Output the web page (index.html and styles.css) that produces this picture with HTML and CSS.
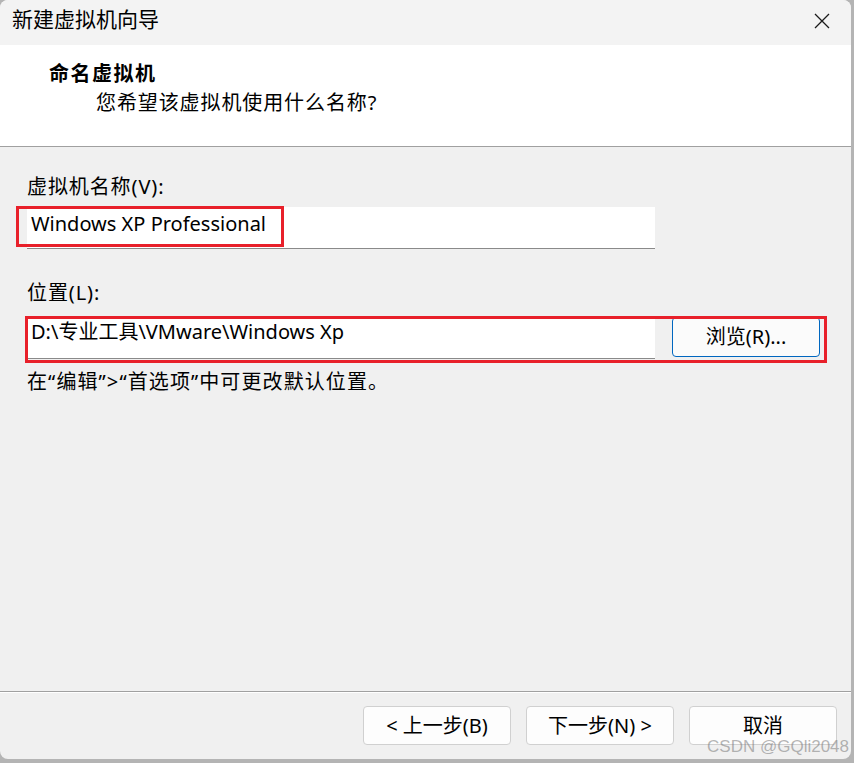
FILE: index.html
```html
<!DOCTYPE html>
<html lang="zh-CN">
<head>
    <meta charset="UTF-8">
    <title>新建虚拟机向导</title>
    <link rel="stylesheet" href="styles.css">
</head>
<body>
    <div class="window">
        <div class="titlebar">
            <span class="title">新建虚拟机向导</span>
            <svg class="close" width="16" height="16" viewBox="0 0 16 16">
                <path d="M1 1 L15 15 M15 1 L1 15" stroke="#1a1a1a" stroke-width="1.3" fill="none"/>
            </svg>
        </div>

        <div class="header">
            <div class="header-title">命名虚拟机</div>
            <div class="header-sub">您希望该虚拟机使用什么名称?</div>
        </div>

        <div class="content">
            <div class="label">虚拟机名称(V):</div>
            <div class="field name-field">
                <span class="field-text">Windows XP Professional</span>
                <div class="mark mark-name"></div>
            </div>

            <div class="label label-loc">位置(L):</div>
            <div class="row">
                <div class="field loc-field">
                    <span class="field-text">D:\专业工具\VMware\Windows Xp</span>
                </div>
                <button class="btn browse">浏览(R)...</button>
                <div class="mark mark-loc"></div>
            </div>
            <div class="hint">在“编辑”&gt;“首选项”中可更改默认位置。</div>
        </div>

        <div class="footer">
            <button class="btn">&lt; 上一步(B)</button>
            <button class="btn">下一步(N) &gt;</button>
            <button class="btn">取消</button>
        </div>

        <div class="watermark">CSDN @GQli2048</div>
    </div>
</body>
</html>
```

FILE: styles.css
```css
body {
    margin: 0;
    padding: 0;
    width: 854px;
    height: 763px;
    overflow: hidden;
    background: #b4b4b4;
    font-family: "Noto Sans", "Noto Sans CJK SC", sans-serif;
    color: #000;
}

.window {
    position: relative;
    width: 851px;
    height: 759px;
    background: #f0f0f0;
    border-radius: 8px;
    overflow: hidden;
    display: flex;
    flex-direction: column;
}

.titlebar {
    height: 45px;
    box-sizing: border-box;
    background: #f3f3f3;
    display: flex;
    align-items: flex-start;
    justify-content: space-between;
    padding: 7px 21px 0 12px;
    font-size: 21px;
    line-height: 24px;
}

.close {
    margin-top: 6px;
}

.header {
    height: 102px;
    box-sizing: border-box;
    background: #fff;
    border-bottom: 1px solid #a0a0a0;
    padding: 17px 0 0 49px;
}

.header-title {
    font-size: 20px;
    line-height: 24px;
    font-weight: bold;
    letter-spacing: 1.5px;
}

.header-sub {
    font-size: 20px;
    line-height: 24px;
    letter-spacing: 0.9px;
    margin: 5px 0 0 47px;
}

.content {
    flex: 1;
    padding: 28px 0 0 27px;
    font-size: 20px;
}

.label {
    line-height: 24px;
    letter-spacing: 0.9px;
}

.label-loc {
    margin-top: 32px;
}

.field {
    position: relative;
    box-sizing: border-box;
    width: 628px;
    height: 42px;
    background: #fff;
    border-bottom: 1px solid #8a8a8a;
    padding: 3px 0 0 4px;
    line-height: 28px;
    font-size: 20px;
}

.name-field {
    margin-top: 8px;
}

.loc-field {
    padding-top: 1px;
}

.row {
    position: relative;
    display: flex;
    gap: 17px;
    margin-top: 12px;
    width: 793px;
}

.btn {
    width: 148px;
    height: 39px;
    box-sizing: border-box;
    background: #fdfdfd;
    border: 1px solid #d0d0d0;
    border-radius: 4px;
    font-family: "Noto Sans", "Noto Sans CJK SC", sans-serif;
    font-size: 20px;
    color: #000;
    padding: 0;
    line-height: 24px;
}

.browse {
    height: 40px;
    border-color: #0067c0;
    background: #fbfbfb;
}

.hint {
    margin-top: 11px;
    line-height: 24px;
    letter-spacing: 1.1px;
}

.mark {
    position: absolute;
    border: 3px solid #e8202a;
    box-sizing: border-box;
}

.mark-name {
    left: -11px;
    top: -1px;
    width: 268px;
    height: 41px;
}

.mark-loc {
    left: -2px;
    top: -1px;
    width: 802px;
    height: 47px;
}

.footer {
    height: 68px;
    box-sizing: border-box;
    border-top: 1px solid #a0a0a0;
    box-shadow: inset 0 1px 0 #fff;
    display: flex;
    justify-content: flex-end;
    gap: 15px;
    padding: 14px 14px 0 0;
}

.watermark {
    position: absolute;
    right: 2px;
    bottom: 2px;
    font-family: "Liberation Sans", sans-serif;
    font-size: 17px;
    color: rgba(120, 120, 120, 0.55);
}
```
